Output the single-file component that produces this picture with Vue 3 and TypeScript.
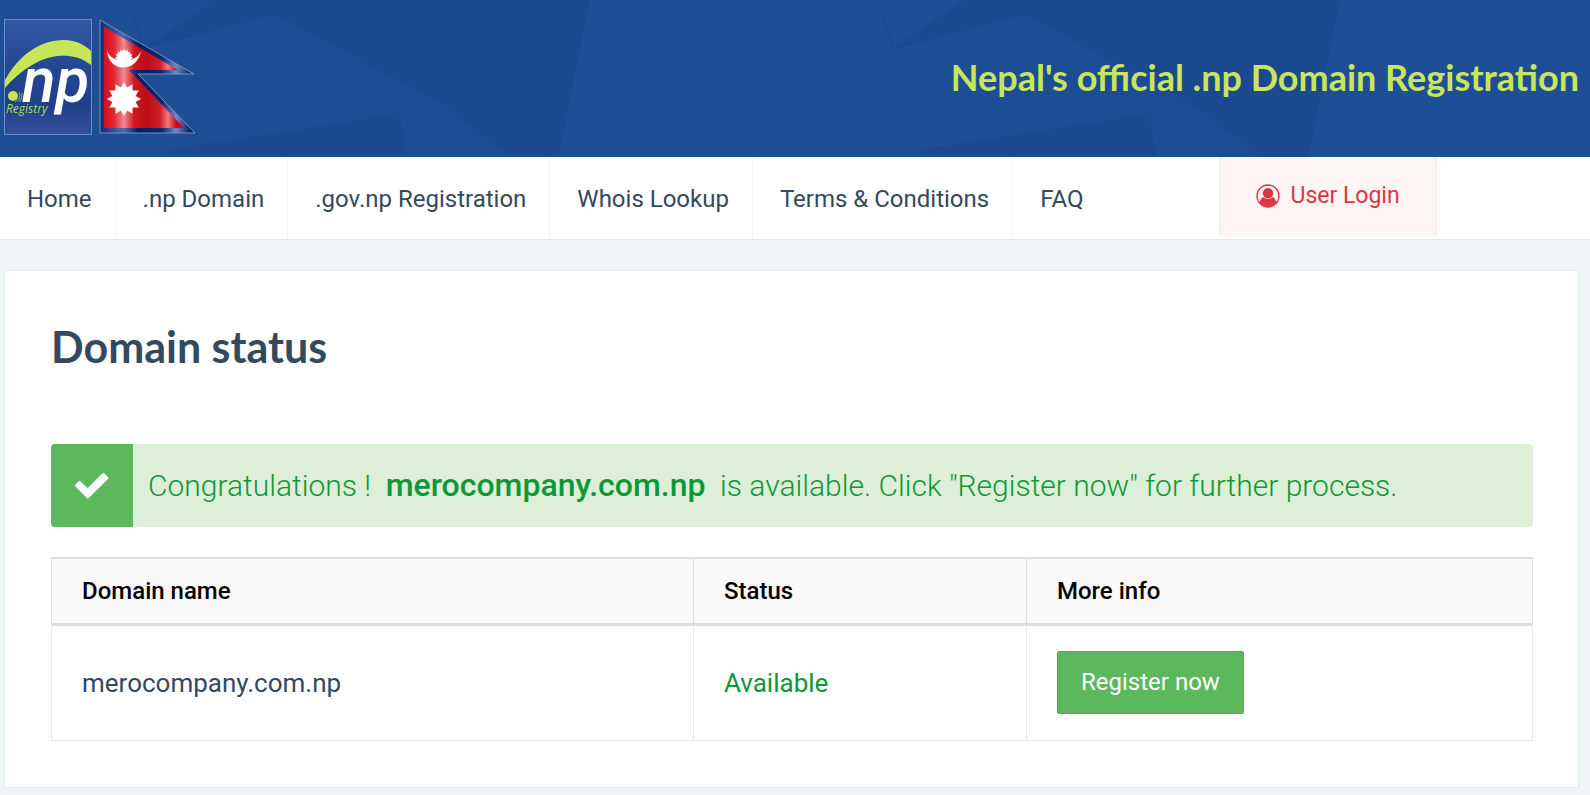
<script setup lang="ts">
interface NavItem {
  label: string
  href: string
}

interface DomainRow {
  name: string
  status: string
}

const navItems: NavItem[] = [
  { label: 'Home', href: '#home' },
  { label: '.np Domain', href: '#np-domain' },
  { label: '.gov.np Registration', href: '#gov-np' },
  { label: 'Whois Lookup', href: '#whois' },
  { label: 'Terms & Conditions', href: '#terms' },
  { label: 'FAQ', href: '#faq' },
]

const rows: DomainRow[] = [{ name: 'merocompany.com.np', status: 'Available' }]

// Points of a many-rayed star, alternating between two radii.
function star(cx: number, cy: number, outer: number, inner: number, rays: number): string {
  const points: string[] = []
  for (let i = 0; i < rays * 2; i++) {
    const r = i % 2 === 0 ? outer : inner
    const a = (Math.PI * i) / rays - Math.PI / 2
    points.push(`${(cx + r * Math.cos(a)).toFixed(1)},${(cy + r * Math.sin(a)).toFixed(1)}`)
  }
  return points.join(' ')
}

const sun = star(25, 80, 17, 12, 12)
const moonRays = star(25, 39, 9, 7, 16)
</script>

<template>
  <header class="banner">
    <svg class="facets" aria-hidden="true">
      <defs>
        <linearGradient id="shard" x1="145" y1="80" x2="470" y2="60" gradientUnits="userSpaceOnUse">
          <stop offset="0" stop-color="#1e4f96" />
          <stop offset="0.4" stop-color="#1d4e95" />
          <stop offset="1" stop-color="#1b4b92" />
        </linearGradient>
        <pattern id="facet" width="750" height="157" patternUnits="userSpaceOnUse">
          <path d="M-160 0H128L170 157H-191Z" fill="#1e4e95" />
          <path d="M590 0H878L920 157H559Z" fill="#1e4e95" />
          <path d="M128 0H214L145 47Z" fill="#1d4d94" />
          <path d="M135 52L275 15L439 102L400 113L165 150Z" fill="url(#shard)" />
          <path d="M400 113L439 102L510 157H406Z" fill="#1c4d94" />
        </pattern>
      </defs>
      <rect width="100%" height="100%" fill="url(#facet)" />
    </svg>
    <a class="brand" href="#home" aria-label=".np Registry">
      <svg width="88" height="116" viewBox="0 0 88 116">
        <defs>
          <linearGradient id="plate" x1="0" y1="0" x2="0" y2="1">
            <stop offset="0" stop-color="#3358a5" />
            <stop offset="0.4" stop-color="#244894" />
            <stop offset="0.75" stop-color="#1f3f89" />
            <stop offset="1" stop-color="#34529b" />
          </linearGradient>
        </defs>
        <rect x="0.5" y="0.5" width="87" height="115" fill="url(#plate)" stroke="#6f8fc4" />
        <path d="M1 61C15 36 36 21 60 21C72 21 81 26 87 32V46C77 38 66 36 54 37C34 39 15 53 1 69Z" fill="#c6e557" />
        <circle cx="9" cy="77" r="5" fill="#c6e557" />
        <path d="M15 73A7 7 0 0 1 11 83M18 74A9 9 0 0 1 15 83" fill="none" stroke="#9dbb55" stroke-width="1" />
        <text x="18" y="83" class="logo-np">np</text>
        <text x="2" y="94" class="logo-registry">Registry</text>
      </svg>
      <svg width="98" height="116" viewBox="0 0 98 116">
        <defs>
          <linearGradient id="cloth" x1="0" y1="0" x2="1" y2="0">
            <stop offset="0" stop-color="#d80f1d" />
            <stop offset="0.12" stop-color="#e12431" />
            <stop offset="0.25" stop-color="#f08b90" />
            <stop offset="0.38" stop-color="#d2141d" />
            <stop offset="0.55" stop-color="#b90f15" />
            <stop offset="0.7" stop-color="#d01c26" />
            <stop offset="0.8" stop-color="#ef7a80" />
            <stop offset="0.9" stop-color="#c80e18" />
          </linearGradient>
          <linearGradient id="hem" x1="0" y1="0" x2="1" y2="0">
            <stop offset="0" stop-color="#142a78" />
            <stop offset="0.25" stop-color="#4d6cae" />
            <stop offset="0.4" stop-color="#091d69" />
            <stop offset="0.65" stop-color="#0d2572" />
            <stop offset="0.8" stop-color="#6d8bc2" />
            <stop offset="0.95" stop-color="#0a1e6b" />
          </linearGradient>
        </defs>
        <path d="M1 1L95 55H39L96 114H1Z" fill="url(#hem)" stroke="#7f91b8" stroke-width="1" />
        <path d="M5 8L79 51H30L85 109H5Z" fill="url(#cloth)" />
        <path d="M8 32C10 54 38 54 42 32C37 45 13 45 8 32Z" fill="#fff" />
        <polygon :points="moonRays" fill="#fff" />
        <polygon :points="sun" fill="#fff" />
      </svg>
    </a>
    <p class="tagline">Nepal's official .np Domain Registration</p>
  </header>

  <nav class="nav" aria-label="Main">
    <ul class="menu">
      <li v-for="item in navItems" :key="item.label">
        <a :href="item.href">{{ item.label }}</a>
      </li>
    </ul>
    <a class="login" href="#login">
      <svg width="24" height="24" viewBox="0 0 24 24" aria-hidden="true">
        <circle cx="12" cy="12" r="11" fill="none" stroke="currentColor" stroke-width="1.3" />
        <circle cx="12" cy="9.300" r="5.200" fill="currentColor" />
        <path d="M3.500 19C4 15.500 5.500 13.700 7.500 13.300C10 15.800 14 15.800 16.500 13.300C18.500 13.700 20 15.500 20.500 19C16.500 24.300 7.500 24.300 3.500 19Z" fill="currentColor" />
      </svg>
      User Login
    </a>
  </nav>

  <main class="card">
    <h1>Domain status</h1>
    <div class="alert" role="status">
      <span class="alert-icon">
        <svg width="36" height="28" viewBox="0 0 36 28" aria-hidden="true">
          <path d="M6.500 9.500Q5.500 8.500 4.500 9.500L1.500 12.500Q0.500 13.500 1.500 14.500L12.500 25.700Q13.700 26.700 15 25.700L34 7Q35 6 34 5L30.500 1.500Q29.500 0.500 28.300 1.500L13.700 16Z" fill="#fff" />
        </svg>
      </span>
      <p>
        Congratulations !&nbsp; <strong>merocompany.com.np</strong> &nbsp;is available. Click "Register now" for further process.
      </p>
    </div>
    <table>
      <thead>
        <tr>
          <th class="col-name" scope="col">Domain name</th>
          <th class="col-status" scope="col">Status</th>
          <th scope="col">More info</th>
        </tr>
      </thead>
      <tbody>
        <tr v-for="row in rows" :key="row.name">
          <td>{{ row.name }}</td>
          <td class="available">{{ row.status }}</td>
          <td><button type="button">Register now</button></td>
        </tr>
      </tbody>
    </table>
  </main>
</template>

<style>
body {
  margin: 0;
  background: #f0f5f8;
  color: #34495e;
  font-family: Roboto, "Liberation Sans", sans-serif;
  font-size: 24px;
}
</style>

<style scoped>
.banner {
  position: relative;
  display: flex;
  align-items: center;
  justify-content: space-between;
  min-height: 157px;
  padding: 0 11px 4px 4px;
  box-sizing: border-box;
  background: #1a4990;
}

.facets {
  position: absolute;
  inset: 0;
  width: 100%;
  height: 100%;
}

.brand {
  position: relative;
  display: flex;
  gap: 7px;
}

.logo-np {
  font: italic 500 62px Roboto, sans-serif;
  fill: #fff;
}

.logo-registry {
  font: italic 400 12px "Open Sans", sans-serif;
  fill: #b5d957;
}

.tagline {
  position: relative;
  margin: 0;
  color: #c8e65c;
  font: 700 36px/40px Lato, sans-serif;
}

.nav {
  display: flex;
  align-items: flex-start;
  background: #fff;
  border-bottom: 1px solid #e1eaee;
}

.menu {
  display: flex;
  margin: 0;
  padding: 0;
  list-style: none;
}

.menu li {
  border-right: 1px solid #f3f5f7;
}

.menu li:last-child {
  border-right: 0;
}

.menu a {
  display: block;
  padding: 2px 23px 0 27px;
  line-height: 80px;
  color: #34495e;
  text-decoration: none;
}

.login {
  display: flex;
  align-items: center;
  gap: 10px;
  margin-left: 113px;
  padding: 0 36px 2px;
  border: solid #fbeaec;
  border-width: 0 1px;
  background: #fff5f4;
  color: #dc3545;
  font-size: 23px;
  line-height: 78px;
  text-decoration: none;
}

.card {
  margin: 30px 11px 8px 4px;
  padding: 46px 45px 46px 46px;
  background: #fff;
  border: 1px solid #e1ecee;
}

h1 {
  margin: 0 0 67px;
  font: 700 43px/60px Lato, sans-serif;
}

.alert {
  display: flex;
  margin-bottom: 30px;
  overflow: hidden;
  border-radius: 4px;
  background: #deefd8;
  color: #0c9838;
}

.alert-icon {
  display: flex;
  flex: none;
  align-items: center;
  justify-content: center;
  width: 82px;
  background: #5cb85c;
}

.alert p {
  margin: 0;
  padding: 0 15px;
  font-size: 30px;
  font-weight: 300;
  line-height: 83px;
}

.alert strong {
  font-size: 32px;
  font-weight: 500;
  line-height: 40px;
}

table {
  width: 100%;
  border-collapse: collapse;
}

th,
td {
  padding: 0 30px;
  text-align: left;
}

th {
  border: 1px solid #ddd;
  border-width: 2px 1px 3px;
  background: #f8f8f8;
  color: #000;
  font-weight: 500;
  line-height: 64px;
}

.col-name {
  width: 581px;
}

.col-status {
  width: 272px;
}

td {
  padding-top: 25px;
  padding-bottom: 26px;
  border: 1px solid #e1ecee;
  font-size: 26px;
}

.available {
  color: #0c9838;
}

button {
  display: block;
  height: 63px;
  padding: 0 23px 2px;
  border: 1px solid #4cae4c;
  border-radius: 2px;
  background: #5cb85c;
  color: #fff;
  font: inherit;
  font-size: 24px;
}
</style>
